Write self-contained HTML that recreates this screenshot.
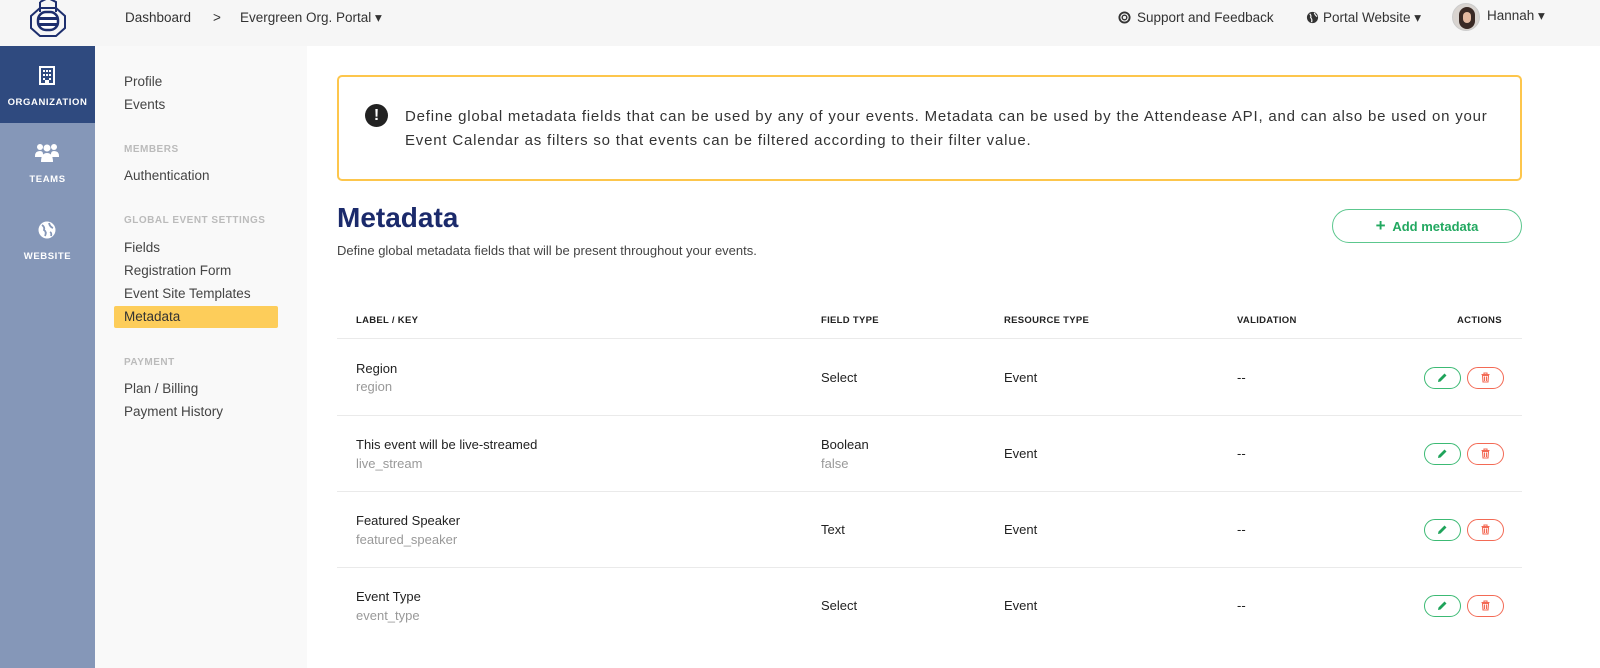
<!DOCTYPE html>
<html><head><style>
*{box-sizing:border-box;margin:0;padding:0}
body{width:1600px;height:668px;overflow:hidden;font-family:"Liberation Sans",sans-serif;background:#fff;color:#222;position:relative}
.top{position:absolute;left:0;top:0;width:1600px;height:46px;background:#f6f6f6}
.top span{position:absolute;top:10px;font-size:13.5px;color:#333}
.rail{position:absolute;left:0;top:46px;width:95px;height:622px;background:#8597b8}
.rail .it{position:absolute;left:0;width:95px;text-align:center;color:#fff;font-size:9.5px;font-weight:bold;letter-spacing:.6px}
.rail svg{position:absolute}
.sub{position:absolute;left:95px;top:46px;width:212px;height:622px;background:#f9f9f9}
.sub div{position:absolute;left:29px;font-size:13.5px;color:#444}
.sub .h{font-size:10px;font-weight:bold;color:#bbb;letter-spacing:.5px}
.alert{position:absolute;left:337px;top:75px;width:1185px;height:106px;border:2px solid #fdc64c;border-radius:5px}
.alert p{position:absolute;left:66px;top:28px;width:1095px;font-size:15px;line-height:24px;color:#333;letter-spacing:.8px}
.hd{font-size:9.5px;font-weight:bold;color:#222;position:absolute;top:315px;letter-spacing:.3px}
.row{position:absolute;left:337px;width:1185px;height:76px;border-top:1px solid #eaeaea}
.row span{position:absolute;font-size:13px;color:#222}
.row .g{color:#999}
.btn{position:absolute;width:37px;height:22px;border-radius:11px;border:1.5px solid}
.btn svg{position:absolute;left:12px;top:4px}
</style></head><body>
<div class="top">
<svg style="position:absolute;left:26px;top:0" width="44" height="38" viewBox="0 0 44 38"><path d="M14 2 L22 -2 L30 2 L30 12 M14 12 L14 2" fill="none" stroke="#1e2f6e" stroke-width="2"/><path d="M5 16 L14 8 L30 8 L39 16 L39 28 L30 36 L14 36 L5 28 Z" fill="none" stroke="#1e2f6e" stroke-width="2"/><rect x="12" y="12" width="20" height="18" rx="8" fill="#fff" stroke="#1e2f6e" stroke-width="2.5"/><rect x="12" y="17" width="20" height="3" fill="#1e2f6e"/><rect x="12" y="23" width="20" height="3" fill="#1e2f6e"/></svg>
<span style="left:125px">Dashboard</span><span style="left:213px">&gt;</span><span style="left:240px">Evergreen Org. Portal ▾</span>
<svg style="position:absolute;left:1118px;top:11px" width="13" height="13" viewBox="0 0 14 14"><circle cx="7" cy="7" r="5.5" fill="none" stroke="#333" stroke-width="2"/><circle cx="7" cy="7" r="2.5" fill="none" stroke="#333" stroke-width="1.5"/></svg>
<span style="left:1137px">Support and Feedback</span>
<svg style="position:absolute;left:1306px;top:11px" width="13" height="13" viewBox="0 0 14 14"><circle cx="7" cy="7" r="6" fill="#333"/><path d="M4 3 Q6 5 5 7 Q7 9 6 12 M9 2 Q10 5 12 6" stroke="#f6f6f6" stroke-width="1.3" fill="none"/></svg>
<span style="left:1323px">Portal Website ▾</span>
<div style="position:absolute;left:1452px;top:3px;width:28px;height:28px;border-radius:50%;background:#d9d4d0;border:1px solid #ccc;overflow:hidden"><div style="position:absolute;left:6px;top:3px;width:16px;height:22px;border-radius:8px;background:#3a2a25"></div><div style="position:absolute;left:10px;top:8px;width:8px;height:11px;border-radius:4px;background:#e3b9a0"></div></div>
<span style="left:1487px;top:8px">Hannah ▾</span>
</div>
<div class="rail">
<div style="position:absolute;left:0;top:0;width:95px;height:77px;background:#2f4a7f"></div>
<svg style="left:39px;top:20px" width="16" height="19" viewBox="0 0 16 19"><rect x="1" y="1" width="14" height="17" fill="none" stroke="#fff" stroke-width="2"/><g fill="#fff"><rect x="4" y="4" width="2" height="2"/><rect x="7" y="4" width="2" height="2"/><rect x="10" y="4" width="2" height="2"/><rect x="4" y="8" width="2" height="2"/><rect x="7" y="8" width="2" height="2"/><rect x="10" y="8" width="2" height="2"/><rect x="4" y="12" width="2" height="2"/><rect x="10" y="12" width="2" height="2"/><rect x="6" y="14" width="4" height="4"/></g></svg>
<div class="it" style="top:51px">ORGANIZATION</div>
<svg style="left:35px;top:97px" width="24" height="20" viewBox="0 0 24 20"><g fill="#fff"><circle cx="5" cy="4" r="3"/><circle cx="19" cy="4" r="3"/><circle cx="12" cy="5" r="3.5"/><path d="M0 13 Q0 8 5 8 Q8 8 8 11 L8 14 L0 14Z"/><path d="M24 13 Q24 8 19 8 Q16 8 16 11 L16 14 L24 14Z"/><path d="M6 19 Q6 10 12 10 Q18 10 18 19Z"/></g></svg>
<div class="it" style="top:128px">TEAMS</div>
<svg style="left:38px;top:175px" width="18" height="18" viewBox="0 0 18 18"><circle cx="9" cy="9" r="8.5" fill="#fff"/><path d="M4 4 Q7 6 6 9 Q9 11 7 15 M11 2 Q12 6 15 7 M12 11 Q14 12 13 15" stroke="#8597b8" stroke-width="1.8" fill="none"/></svg>
<div class="it" style="top:205px">WEBSITE</div>
</div>
<div class="sub">
<div style="top:28px">Profile</div><div style="top:51px">Events</div>
<div class="h" style="top:98px">MEMBERS</div><div style="top:122px">Authentication</div>
<div class="h" style="top:169px">GLOBAL EVENT SETTINGS</div>
<div style="top:194px">Fields</div><div style="top:217px">Registration Form</div><div style="top:240px">Event Site Templates</div>
<div style="top:260px;left:19px;width:164px;height:22px;background:#fdcd5a;border-radius:2px;padding:3px 10px;color:#333">Metadata</div>
<div class="h" style="top:311px">PAYMENT</div><div style="top:335px">Plan / Billing</div><div style="top:358px">Payment History</div>
</div>
<div class="alert"><div style="position:absolute;left:26px;top:27px;width:23px;height:23px;border-radius:50%;background:#222;color:#fff;text-align:center;font-weight:bold;font-size:16px;line-height:23px">!</div><p>Define global metadata fields that can be used by any of your events. Metadata can be used by the Attendease API, and can also be used on your Event Calendar as filters so that events can be filtered according to their filter value.</p></div>
<div style="position:absolute;left:337px;top:202px;font-size:28px;font-weight:bold;color:#1b2a6b">Metadata</div>
<div style="position:absolute;left:337px;top:243px;font-size:13px;color:#444">Define global metadata fields that will be present throughout your events.</div>
<div style="position:absolute;left:1332px;top:209px;width:190px;height:34px;border:1.5px solid #5cc78e;border-radius:17px;text-align:center;line-height:31px;font-size:13px;font-weight:bold;color:#22a860"><span style="font-size:17px">+</span>&nbsp; Add metadata</div>
<div class="hd" style="left:356px">LABEL / KEY</div><div class="hd" style="left:821px">FIELD TYPE</div><div class="hd" style="left:1004px">RESOURCE TYPE</div><div class="hd" style="left:1237px">VALIDATION</div><div class="hd" style="left:1457px">ACTIONS</div>

<div class="row" style="top:338px"><span style="left:19px;top:22px">Region</span><span class="g" style="left:19px;top:40px">region</span><span style="left:484px;top:31px">Select</span><span style="left:667px;top:31px">Event</span><span style="left:900px;top:31px">--</span>
<div class="btn" style="left:1087px;top:28px;border-color:#3cba74"><svg width="11" height="11" viewBox="0 0 11 11"><path d="M1 10 L1.5 7.5 L7.5 1.5 L9.5 3.5 L3.5 9.5Z" fill="#1fa35a"/></svg></div>
<div class="btn" style="left:1130px;top:28px;border-color:#f36a55"><svg width="11" height="11" viewBox="0 0 11 11"><path d="M1.5 2.5 H9.5 M4 2.5 V1 H7 V2.5 M2.5 3.5 L3 10 H8 L8.5 3.5Z M4.5 4.5V9 M6.5 4.5V9" stroke="#f36a55" stroke-width="1.1" fill="none"/></svg></div></div>

<div class="row" style="top:415px"><span style="left:19px;top:21px">This event will be live-streamed</span><span class="g" style="left:19px;top:40px">live_stream</span><span style="left:484px;top:21px">Boolean</span><span class="g" style="left:484px;top:40px">false</span><span style="left:667px;top:30px">Event</span><span style="left:900px;top:30px">--</span>
<div class="btn" style="left:1087px;top:27px;border-color:#3cba74"><svg width="11" height="11" viewBox="0 0 11 11"><path d="M1 10 L1.5 7.5 L7.5 1.5 L9.5 3.5 L3.5 9.5Z" fill="#1fa35a"/></svg></div>
<div class="btn" style="left:1130px;top:27px;border-color:#f36a55"><svg width="11" height="11" viewBox="0 0 11 11"><path d="M1.5 2.5 H9.5 M4 2.5 V1 H7 V2.5 M2.5 3.5 L3 10 H8 L8.5 3.5Z M4.5 4.5V9 M6.5 4.5V9" stroke="#f36a55" stroke-width="1.1" fill="none"/></svg></div></div>

<div class="row" style="top:491px"><span style="left:19px;top:21px">Featured Speaker</span><span class="g" style="left:19px;top:40px">featured_speaker</span><span style="left:484px;top:30px">Text</span><span style="left:667px;top:30px">Event</span><span style="left:900px;top:30px">--</span>
<div class="btn" style="left:1087px;top:27px;border-color:#3cba74"><svg width="11" height="11" viewBox="0 0 11 11"><path d="M1 10 L1.5 7.5 L7.5 1.5 L9.5 3.5 L3.5 9.5Z" fill="#1fa35a"/></svg></div>
<div class="btn" style="left:1130px;top:27px;border-color:#f36a55"><svg width="11" height="11" viewBox="0 0 11 11"><path d="M1.5 2.5 H9.5 M4 2.5 V1 H7 V2.5 M2.5 3.5 L3 10 H8 L8.5 3.5Z M4.5 4.5V9 M6.5 4.5V9" stroke="#f36a55" stroke-width="1.1" fill="none"/></svg></div></div>

<div class="row" style="top:567px"><span style="left:19px;top:21px">Event Type</span><span class="g" style="left:19px;top:40px">event_type</span><span style="left:484px;top:30px">Select</span><span style="left:667px;top:30px">Event</span><span style="left:900px;top:30px">--</span>
<div class="btn" style="left:1087px;top:27px;border-color:#3cba74"><svg width="11" height="11" viewBox="0 0 11 11"><path d="M1 10 L1.5 7.5 L7.5 1.5 L9.5 3.5 L3.5 9.5Z" fill="#1fa35a"/></svg></div>
<div class="btn" style="left:1130px;top:27px;border-color:#f36a55"><svg width="11" height="11" viewBox="0 0 11 11"><path d="M1.5 2.5 H9.5 M4 2.5 V1 H7 V2.5 M2.5 3.5 L3 10 H8 L8.5 3.5Z M4.5 4.5V9 M6.5 4.5V9" stroke="#f36a55" stroke-width="1.1" fill="none"/></svg></div></div>
</body></html>
